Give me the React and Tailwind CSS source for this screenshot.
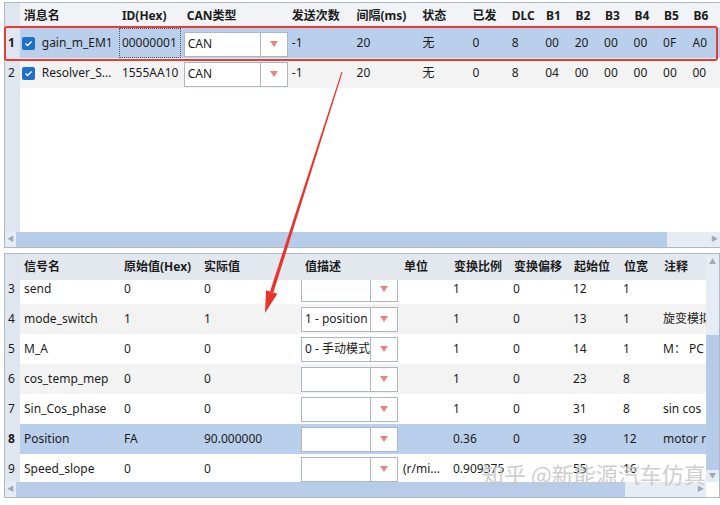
import React from "react";

const FONT = "font-['Noto_Sans','Noto_Sans_CJK_SC',sans-serif]";

function DropArrow() {
  return (
    <svg width="8" height="6" viewBox="0 0 8 6">
      <path d="M0 0H8L4 6Z" fill="#e8837d" />
    </svg>
  );
}

function Combo({ text, width }) {
  return (
    <div className={`${width} h-[25px] flex bg-white border border-[#aeb6c1]`}>
      <div className="flex-1 flex items-center pl-[3px] overflow-hidden whitespace-nowrap">{text}</div>
      <div className="w-[27px] flex items-center justify-center border-l border-[#aeb6c1]">
        <DropArrow />
      </div>
    </div>
  );
}

function Check() {
  return (
    <div className="w-[13px] h-[13px] rounded-[2px] bg-[#1f6fcc] flex items-center justify-center">
      <svg width="9" height="9" viewBox="0 0 9 9">
        <path d="M1.5 4.6L3.6 6.6L7.6 2.4" stroke="white" strokeWidth="1.4" fill="none" />
      </svg>
    </div>
  );
}

function HScroll({ thumb }) {
  return (
    <div className="h-[15px] flex bg-[#e6ecf4]">
      <div className="w-[11px] flex items-center justify-center text-[7px] text-[#a0a8b4]">◀</div>
      <div className={`${thumb} bg-[#b7cce8]`} />
      <div className="flex-1" />
      <div className="w-[11px] flex items-center justify-center text-[7px] text-[#a0a8b4]">▶</div>
    </div>
  );
}

const topRows = [
  {
    n: "1",
    name: "gain_m_EM1",
    id: "00000001",
    send: "-1",
    gap: "20",
    st: "无",
    sent: "0",
    dlc: "8",
    b: ["00", "20", "00", "00", "0F", "A0"],
    sel: true,
  },
  {
    n: "2",
    name: "Resolver_S...",
    id: "1555AA10",
    send: "-1",
    gap: "20",
    st: "无",
    sent: "0",
    dlc: "8",
    b: ["04", "00", "00", "00", "00", "00"],
    bg: "bg-[#f3f3f3]",
  },
];

const bottomRows = [
  { n: "3", name: "send", raw: "0", val: "0", desc: "", unit: "", k: "1", off: "0", start: "12", len: "1", note: "", bg: "bg-white" },
  { n: "4", name: "mode_switch", raw: "1", val: "1", desc: "1 - position", unit: "", k: "1", off: "0", start: "13", len: "1", note: "旋变模拟", bg: "bg-[#f3f3f3]" },
  { n: "5", name: "M_A", raw: "0", val: "0", desc: "0 - 手动模式", unit: "", k: "1", off: "0", start: "14", len: "1", note: "M：  PC", bg: "bg-white" },
  { n: "6", name: "cos_temp_mep", raw: "0", val: "0", desc: "", unit: "", k: "1", off: "0", start: "23", len: "8", note: "", bg: "bg-[#f3f3f3]" },
  { n: "7", name: "Sin_Cos_phase", raw: "0", val: "0", desc: "", unit: "", k: "1", off: "0", start: "31", len: "8", note: "sin cos", bg: "bg-white" },
  { n: "8", name: "Position", raw: "FA", val: "90.000000", desc: "", unit: "", k: "0.36", off: "0", start: "39", len: "12", note: "motor r", bg: "bg-[#b9cfeb]", sel: true },
  { n: "9", name: "Speed_slope", raw: "0", val: "0", desc: "", unit: "(r/mi...", k: "0.909375", off: "", start: "55", len: "16", note: "", bg: "bg-white" },
];

export default function App() {
  return (
    <div className={`relative w-[720px] h-[505px] bg-white overflow-hidden text-[12px] text-[#1c1c1c] ${FONT}`}>
      {/* Top message table */}
      <div className="ml-[4px] mt-[2px] h-[246px] border border-r-0 border-[#aeb9c7] flex flex-col overflow-hidden">
        <div className="h-[25px] flex items-center bg-[#f1f3f6] font-bold text-[12px] whitespace-nowrap">
          <div className="w-[15px] h-full bg-[#dfe6ef]" />
          <div className="w-[101px] pl-[4px]">消息名</div>
          <div className="w-[63px] pl-[3px]">ID(Hex)</div>
          <div className="w-[110px] pl-[6px]">CAN类型</div>
          <div className="w-[66px] pl-[3px]">发送次数</div>
          <div className="w-[67px] pl-[3px]">间隔(ms)</div>
          <div className="w-[51px] pl-[3px]">状态</div>
          <div className="w-[40px] pl-[3px]">已发</div>
          <div className="w-[35px] pl-[3px]">DLC</div>
          <div className="w-[30px] pl-[3px]">B1</div>
          <div className="w-[30px] pl-[3px]">B2</div>
          <div className="w-[30px] pl-[3px]">B3</div>
          <div className="w-[30px] pl-[3px]">B4</div>
          <div className="w-[30px] pl-[3px]">B5</div>
          <div className="w-[30px] pl-[3px]">B6</div>
        </div>
        {topRows.map((r) => (
          <div key={r.n} className={`h-[30px] flex items-center whitespace-nowrap ${r.sel ? "bg-[#b9cfeb]" : r.bg}`}>
            <div className={`w-[15px] h-full flex items-center justify-center pr-[2px] bg-[#dfe6ef] ${r.sel ? "font-bold" : ""}`}>
              {r.n}
            </div>
            <div className="w-[101px] flex items-center gap-[7px] pl-[2px]">
              <Check />
              <span>{r.name}</span>
            </div>
            <div
              className={`w-[63px] h-full flex items-center pl-[2px] border ${
                r.sel ? "border-dotted border-[#555]" : "border-transparent"
              }`}
            >
              {r.id}
            </div>
            <div className="w-[110px] pl-[3px] pt-[2px]">
              <Combo text="CAN" width="w-[104px]" />
            </div>
            <div className="w-[66px] pl-[3px]">{r.send}</div>
            <div className="w-[67px] pl-[3px]">{r.gap}</div>
            <div className="w-[51px] pl-[3px]">{r.st}</div>
            <div className="w-[40px] pl-[3px]">{r.sent}</div>
            <div className="w-[35px] pl-[3px]">{r.dlc}</div>
            {r.b.map((v, i) => (
              <div key={i} className="w-[30px] pl-[2px]">
                {v}
              </div>
            ))}
          </div>
        ))}
        <div className="flex-1 flex">
          <div className="w-[15px] bg-[#dfe6ef]" />
          <div className="flex-1 bg-white" />
        </div>
        <HScroll thumb="w-[651px]" />
      </div>

      {/* Bottom signal table */}
      <div className="ml-[4px] mt-[5px] w-[716px] h-[245px] border border-[#aeb9c7] flex overflow-hidden">
        <div className="w-[701px] flex flex-col">
          <div className="h-[26px] flex items-center bg-[#e3e8ef] font-bold text-[12px] whitespace-nowrap">
            <div className="w-[15px] h-full bg-[#dfe6ef]" />
            <div className="w-[101px] pl-[4px]">信号名</div>
            <div className="w-[80px] pl-[3px]">原始值(Hex)</div>
            <div className="w-[97px] pl-[3px]">实际值</div>
            <div className="w-[102px] pl-[7px]">值描述</div>
            <div className="w-[50px] pl-[4px]">单位</div>
            <div className="w-[60px] pl-[4px]">变换比例</div>
            <div className="w-[60px] pl-[4px]">变换偏移</div>
            <div className="w-[50px] pl-[4px]">起始位</div>
            <div className="w-[40px] pl-[4px]">位宽</div>
            <div className="w-[46px] pl-[4px]">注释</div>
          </div>
          <div className="h-[202px] overflow-hidden">
            <div className="-mt-[6px]">
              {bottomRows.map((r) => (
                <div key={r.n} className={`h-[30px] flex items-center whitespace-nowrap ${r.bg}`}>
                  <div
                    className={`w-[15px] h-full flex items-center justify-center pr-[2px] bg-[#dfe6ef] ${
                      r.sel ? "font-bold" : ""
                    }`}
                  >
                    {r.n}
                  </div>
                  <div className="w-[101px] pl-[4px]">{r.name}</div>
                  <div className="w-[80px] pl-[3px]">{r.raw}</div>
                  <div className="w-[97px] pl-[3px]">{r.val}</div>
                  <div className="w-[102px] pl-[3px]">
                    <Combo text={r.desc} width="w-[97px]" />
                  </div>
                  <div className="w-[50px] pl-[3px]">{r.unit}</div>
                  <div className="w-[60px] pl-[3px]">{r.k}</div>
                  <div className="w-[60px] pl-[3px]">{r.off}</div>
                  <div className="w-[50px] pl-[3px]">{r.start}</div>
                  <div className="w-[40px] pl-[3px]">{r.len}</div>
                  <div className="w-[46px] pl-[3px] overflow-hidden">{r.note}</div>
                </div>
              ))}
            </div>
          </div>
          <HScroll thumb="w-[609px]" />
        </div>
        <div className="flex-1 flex flex-col bg-[#e6ecf4]">
          <div className="h-[16px] flex items-center justify-center text-[7px] text-[#a0a8b4]">▲</div>
          <div className="h-[65px]" />
          <div className="h-[135px] bg-[#b7cce8]" />
          <div className="h-[12px] flex items-center justify-center text-[7px] text-[#a0a8b4]">▼</div>
          <div className="flex-1 bg-white" />
        </div>
      </div>

      {/* Annotation: red frame around the first message */}
      <div className="absolute left-[4px] top-[26px] w-[714px] h-[35px] border-[2.5px] border-[#e53d35] rounded-[3px]" />

      {/* Annotation: red arrow */}
      <svg className="absolute left-0 top-0" width="720" height="505" viewBox="0 0 720 505">
        <polygon points="342.5,72.2 341.5,71.8 270,291.5 273.4,292.5" fill="#e8352c" />
        <polygon points="265,313 277.4,293.8 266,290.2" fill="#e8352c" />
      </svg>

      {/* Watermark */}
      <div className="absolute left-[482px] top-[459px] text-[22px] leading-[28px] text-[#c9c9c9] opacity-90 whitespace-nowrap font-['Noto_Sans_CJK_SC',sans-serif]">
        知乎 @新能源汽车仿真
      </div>
    </div>
  );
}
